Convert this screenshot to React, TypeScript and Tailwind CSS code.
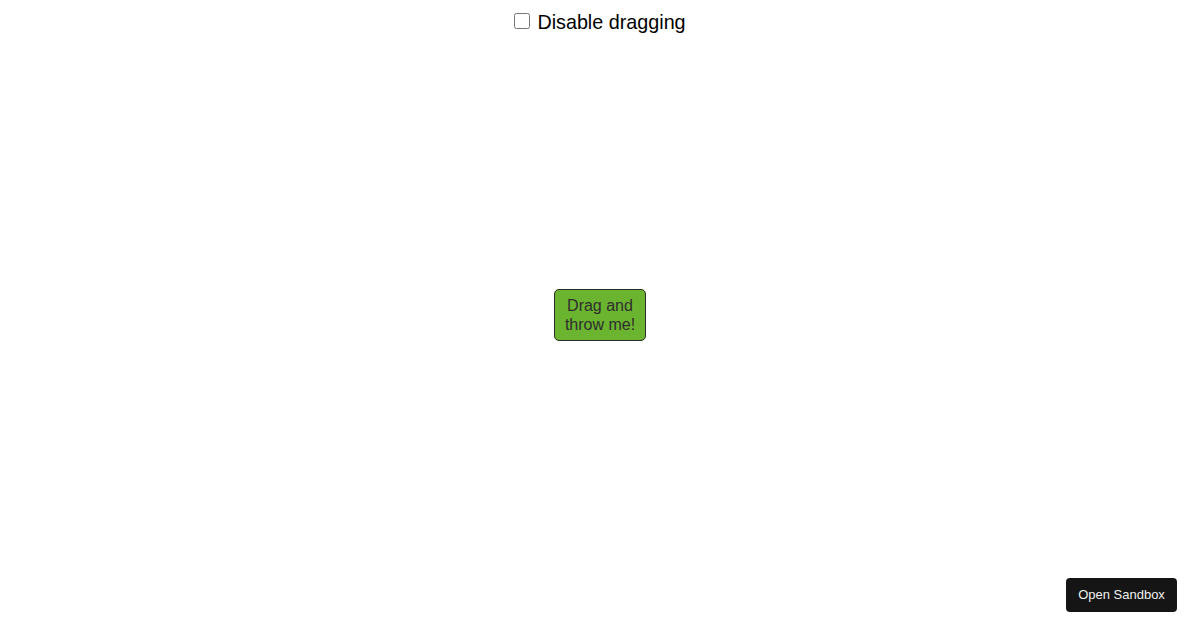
import React from "react";

export default function App() {
  return (
    <div
      className="relative h-screen w-full overflow-hidden bg-white"
      style={{ fontFamily: '"Liberation Sans", Arial, sans-serif' }}
    >
      <div className="absolute inset-0 flex items-center justify-center">
        <div className="w-[92px] h-[52px] rounded-[5px] border border-[#2b2b2b] bg-[#6bb42f] flex flex-col items-center justify-center text-[16px] leading-[19px] text-[#2e2e2e] text-center select-none">
          <span>Drag and</span>
          <span>throw me!</span>
        </div>
      </div>
      <div className="relative flex justify-center pt-[10px]">
        <label className="flex items-center gap-[7px] text-[19.75px] leading-[23px] text-black">
          <input type="checkbox" className="w-4 h-4 m-0 -translate-y-px" />
          <span className="translate-y-px">Disable dragging</span>
        </label>
      </div>
      <button className="absolute right-[23px] bottom-[18px] h-[34px] w-[111px] rounded-[4px] bg-[#151515] text-[13px] text-[#f0f0f0] flex items-center justify-center">
        Open Sandbox
      </button>
    </div>
  );
}
